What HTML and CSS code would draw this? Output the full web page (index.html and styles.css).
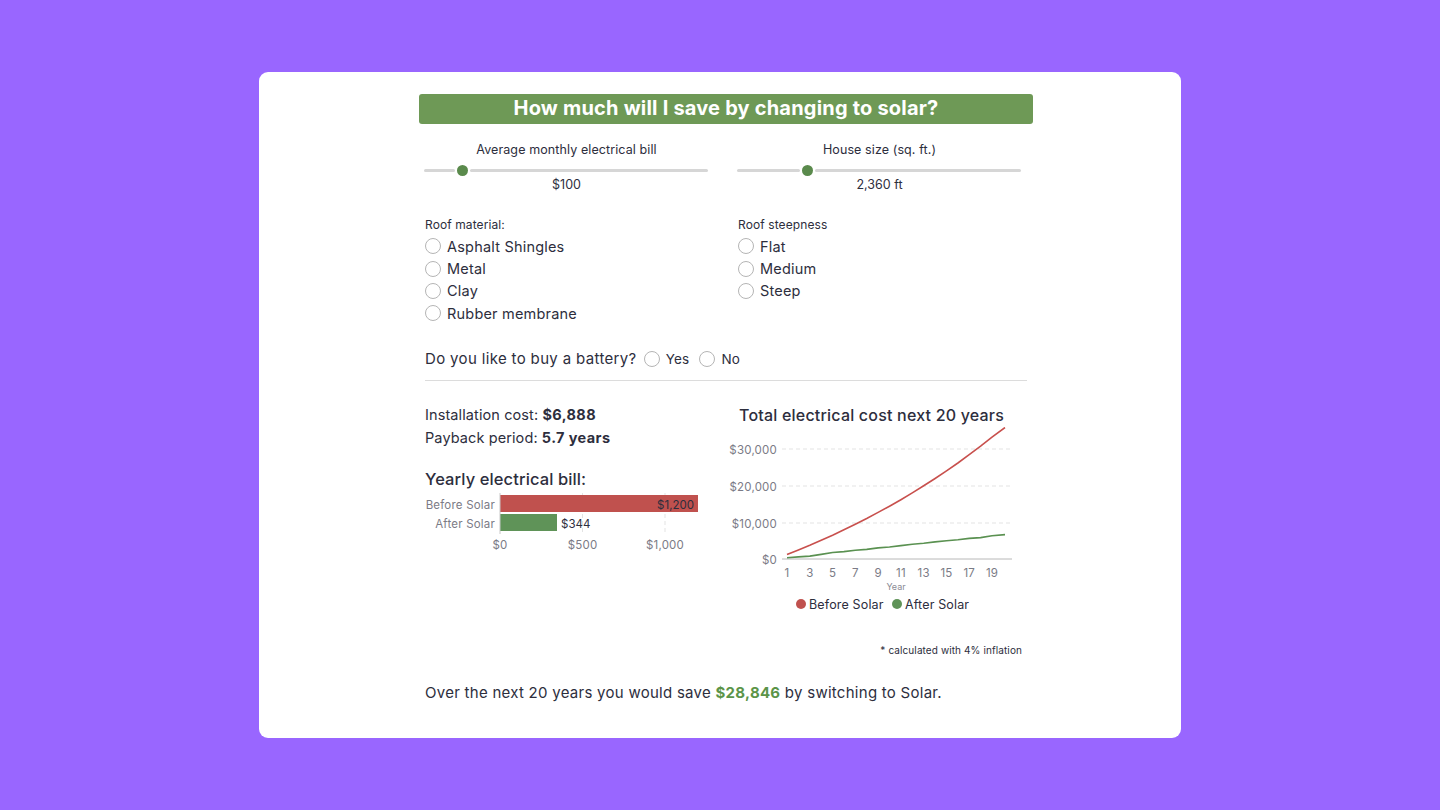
FILE: index.html
```html
<!DOCTYPE html>
<html lang="en">
<head>
<meta charset="utf-8">
<title>Solar savings</title>
<link rel="stylesheet" href="styles.css">
</head>
<body>
<div class="card">
  <h1 class="title">How much will I save by changing to solar?</h1>
  <div class="inner">
    <div class="two-col sliders">
      <div class="slider">
        <div class="slider-label">Average monthly electrical bill</div>
        <div class="track">
          <span class="seg seg-a1"></span><span class="thumb"></span><span class="seg seg-rest"></span>
        </div>
        <div class="slider-value">$100</div>
      </div>
      <div class="slider">
        <div class="slider-label">House size (sq. ft.)</div>
        <div class="track">
          <span class="seg seg-b1"></span><span class="thumb"></span><span class="seg seg-rest"></span>
        </div>
        <div class="slider-value">2,360 ft</div>
      </div>
    </div>

    <div class="two-col radios">
      <div class="group">
        <div class="group-label">Roof material:</div>
        <div class="opt"><span class="radio"></span>Asphalt Shingles</div>
        <div class="opt"><span class="radio"></span>Metal</div>
        <div class="opt"><span class="radio"></span>Clay</div>
        <div class="opt"><span class="radio"></span>Rubber membrane</div>
      </div>
      <div class="group">
        <div class="group-label">Roof steepness</div>
        <div class="opt"><span class="radio"></span>Flat</div>
        <div class="opt"><span class="radio"></span>Medium</div>
        <div class="opt"><span class="radio"></span>Steep</div>
      </div>
    </div>

    <div class="battery">
      <span>Do you like to buy a battery?</span>
      <span class="bopt"><span class="radio"></span>Yes</span>
      <span class="bopt"><span class="radio"></span>No</span>
    </div>

    <div class="rule"></div>

    <div class="results">
      <div class="res-left">
        <div class="stat">Installation cost: <b>$6,888</b></div>
        <div class="stat">Payback period: <b>5.7 years</b></div>
        <div class="sub-title">Yearly electrical bill:</div>
        <svg class="bar-chart" width="296" height="64" viewBox="413 491 296 64">
          <line x1="582.5" y1="493" x2="582.5" y2="534" class="grid"/>
          <line x1="665" y1="493" x2="665" y2="534" class="grid"/>
          <rect x="500" y="495" width="198" height="17" class="bar-red"/>
          <rect x="500" y="514" width="57" height="17" class="bar-green"/>
          <line x1="500" y1="493" x2="500" y2="534" class="axis"/>
          <text x="495" y="509" class="lbl" text-anchor="end">Before Solar</text>
          <text x="495" y="528" class="lbl" text-anchor="end">After Solar</text>
          <text x="694" y="508.5" class="val" text-anchor="end">$1,200</text>
          <text x="561" y="527.5" class="val">$344</text>
          <text x="500" y="549" class="lbl" text-anchor="middle">$0</text>
          <text x="582.5" y="549" class="lbl" text-anchor="middle">$500</text>
          <text x="665" y="549" class="lbl" text-anchor="middle">$1,000</text>
        </svg>
      </div>
      <div class="res-right">
        <div class="chart-title">Total electrical cost next 20 years</div>
        <svg class="line-chart" width="300" height="188" viewBox="728 427 300 188">
          <line x1="782" y1="449" x2="1010" y2="449" class="hgrid"/>
          <line x1="782" y1="486" x2="1010" y2="486" class="hgrid"/>
          <line x1="782" y1="523" x2="1010" y2="523" class="hgrid"/>
          <line x1="782" y1="559" x2="1012" y2="559" class="xaxis"/>
          <text x="777" y="454" class="lbl2" text-anchor="end">$30,000</text>
          <text x="777" y="491" class="lbl2" text-anchor="end">$20,000</text>
          <text x="777" y="528" class="lbl2" text-anchor="end">$10,000</text>
          <text x="777" y="564" class="lbl2" text-anchor="end">$0</text>
          <text x="787" y="576.5" class="lbl2" text-anchor="middle">1</text>
          <text x="809.8" y="576.5" class="lbl2" text-anchor="middle">3</text>
          <text x="832.6" y="576.5" class="lbl2" text-anchor="middle">5</text>
          <text x="855.3" y="576.5" class="lbl2" text-anchor="middle">7</text>
          <text x="878.1" y="576.5" class="lbl2" text-anchor="middle">9</text>
          <text x="900.9" y="576.5" class="lbl2" text-anchor="middle">11</text>
          <text x="923.7" y="576.5" class="lbl2" text-anchor="middle">13</text>
          <text x="946.5" y="576.5" class="lbl2" text-anchor="middle">15</text>
          <text x="969.2" y="576.5" class="lbl2" text-anchor="middle">17</text>
          <text x="992" y="576.5" class="lbl2" text-anchor="middle">19</text>
          <text x="896" y="589.5" class="axis-title" text-anchor="middle">Year</text>
          <polyline class="line-red" points="787,554.6 798.4,550.0 809.8,545.3 821.2,540.3 832.6,535.2 843.9,529.8 855.3,524.2 866.7,518.5 878.1,512.4 889.5,506.2 900.9,499.7 912.3,492.9 923.7,485.8 935.1,478.5 946.5,470.9 957.9,463.0 969.2,454.7 980.6,446.2 992,437.2 1005,427.5"/>
          <polyline class="line-green" points="787,557.8 798.4,556.9 809.8,556.1 821.2,554.4 832.6,552.5 843.9,551.6 855.3,550.2 866.7,549.4 878.1,547.9 889.5,547.0 900.9,545.6 912.3,544.2 923.7,543.3 935.1,541.9 946.5,540.8 957.9,539.8 969.2,538.4 980.6,537.6 992,535.8 1005,534.6"/>
          <circle cx="801" cy="604" r="5" class="dot-red"/>
          <text x="809" y="608.5" class="legend">Before Solar</text>
          <circle cx="897" cy="604" r="5" class="dot-green"/>
          <text x="905" y="608.5" class="legend">After Solar</text>
        </svg>
      </div>
    </div>

    <div class="footnote">* calculated with 4% inflation</div>
    <div class="summary">Over the next 20 years you would save <b class="green">$28,846</b> by switching to Solar.</div>
  </div>
</div>
</body>
</html>
```

FILE: styles.css
```css
html, body {
  margin: 0;
  padding: 0;
}
body {
  background: #9966ff;
  font-family: "Inter", "Open Sans", "Liberation Sans", sans-serif;
  color: #2d2e3d;
  min-height: 810px;
  padding-top: 72px;
  box-sizing: border-box;
}
.card {
  width: 922px;
  height: 666px;
  margin: 0 auto;
  background: #ffffff;
  border-radius: 9px;
  box-sizing: border-box;
  padding: 22px 148px 0 160px;
}
.title {
  margin: 0;
  height: 30px;
  line-height: 28px;
  background: #6e9956;
  color: #ffffff;
  border-radius: 3px;
  text-align: center;
  font-size: 20px;
  letter-spacing: 0.2px;
  font-weight: 700;
}
.inner {
  padding: 0 6px;
}
.two-col {
  display: grid;
  grid-template-columns: 283px 283px;
  column-gap: 30px;
}
.sliders {
  margin-top: 18px;
}
.slider-label {
  font-size: 12.5px;
  letter-spacing: 0.1px;
  line-height: 16px;
  text-align: center;
}
.track {
  margin-top: 6px;
  height: 12px;
  display: flex;
  align-items: center;
  gap: 2px;
  margin-left: -1px;
}
.seg {
  height: 3px;
  background: #d6d6d6;
  border-radius: 2px;
}
.seg-a1 { width: 31px; }
.seg-b1 { width: 63px; }
.seg-rest { flex: 1; }
.thumb {
  width: 11px;
  height: 11px;
  border-radius: 50%;
  background: #5a8a4c;
  flex: none;
}
.slider-value {
  font-size: 12.5px;
  line-height: 16px;
  margin-top: 1px;
  text-align: center;
}
.radios {
  margin-top: 24px;
}
.group-label {
  font-size: 12px;
  letter-spacing: 0.1px;
  line-height: 16px;
  margin-bottom: 2px;
}
.opt {
  height: 22.4px;
  display: flex;
  align-items: center;
  font-size: 14.5px;
  letter-spacing: 0.2px;
}
.radio {
  width: 16px;
  height: 16px;
  border: 1px solid #b5b5b5;
  border-radius: 50%;
  box-sizing: border-box;
  margin-right: 6px;
  flex: none;
  background: #fff;
}
.battery {
  margin-top: 23px;
  height: 22px;
  display: flex;
  align-items: center;
  font-size: 15px;
  letter-spacing: 0.35px;
}
.bopt {
  display: flex;
  align-items: center;
  margin-left: 7px;
  font-size: 13.5px;
  letter-spacing: 0.2px;
}
.bopt + .bopt {
  margin-left: 10px;
}
.bopt .radio {
  margin-right: 6px;
}
.rule {
  margin-top: 10px;
  height: 1px;
  background: #dcdcdc;
}
.results {
  display: grid;
  grid-template-columns: 303px 299px;
  margin-top: 22px;
}
.stat {
  font-size: 14.5px;
  line-height: 23px;
  letter-spacing: 0.1px;
}
.stat b {
  font-weight: 700;
  letter-spacing: 0.4px;
}
.sub-title {
  margin-top: 18px;
  font-size: 16.5px;
  font-weight: 500;
  line-height: 24px;
  letter-spacing: 0.1px;
}
.bar-chart, .line-chart {
  display: block;
}
.bar-chart {
  margin-left: -12px;
}
.chart-title {
  font-size: 16px;
  font-weight: 500;
  line-height: 24px;
  letter-spacing: 0.2px;
  padding-left: 11px;
}
.grid {
  stroke: #e3e3e3;
  stroke-width: 1;
  stroke-dasharray: 4 3;
}
.axis {
  stroke: #c8c8c8;
  stroke-width: 1;
}
.hgrid {
  stroke: #e3e3e3;
  stroke-width: 1;
  stroke-dasharray: 4 3;
}
.xaxis {
  stroke: #b8b8b8;
  stroke-width: 1;
}
.bar-red { fill: #c0514e; }
.bar-green { fill: #5f9358; }
.lbl {
  font-family: "Inter", "Open Sans", sans-serif;
  font-size: 11.5px;
  letter-spacing: 0.2px;
  fill: #7b7b86;
}
.lbl2 {
  font-family: "Inter", "Open Sans", sans-serif;
  font-size: 11.5px;
  letter-spacing: 0.2px;
  fill: #7b7b86;
}
.val {
  font-family: "Inter", "Open Sans", sans-serif;
  font-size: 11.5px;
  fill: #2d2e3d;
}
.axis-title {
  font-family: "Inter", "Open Sans", sans-serif;
  font-size: 9px;
  fill: #8a8a94;
}
.legend {
  font-family: "Inter", "Open Sans", sans-serif;
  font-size: 12.5px;
  letter-spacing: 0.15px;
  fill: #2d2e3d;
}
.line-red {
  fill: none;
  stroke: #c8504d;
  stroke-width: 1.6;
}
.line-green {
  fill: none;
  stroke: #5a9151;
  stroke-width: 1.6;
}
.dot-red { fill: #c0514e; }
.dot-green { fill: #5f9358; }
.footnote {
  margin-top: 28px;
  text-align: right;
  font-size: 10px;
  line-height: 14px;
  padding-right: 5px;
  letter-spacing: 0.1px;
}
.summary {
  margin-top: 25px;
  font-size: 15px;
  line-height: 22px;
  letter-spacing: 0.27px;
}
.summary .green {
  color: #5b9448;
  font-weight: 700;
}
```
